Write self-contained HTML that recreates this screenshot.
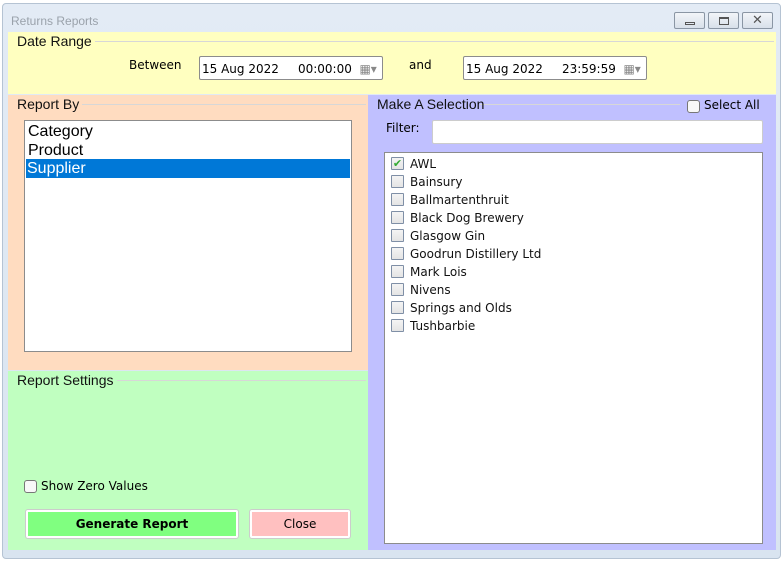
<!DOCTYPE html>
<html><head><style>
*{box-sizing:border-box}
body{margin:0;width:784px;height:561px;background:#fff;font-family:"DejaVu Sans","Liberation Sans",sans-serif;font-size:12px;position:relative;overflow:hidden}
.win{position:absolute;left:2px;top:3px;width:779px;height:556px;background:linear-gradient(#e3ebf5,#d9e4f0);border:1px solid #b5c3d3;border-radius:4px}
.abs{position:absolute}
.title{left:11px;top:14px;color:#9aa2ab;font-size:12px;font-family:"Liberation Sans",sans-serif}
.wb{position:absolute;top:12px;width:31px;height:17px;border:1px solid #8a96a4;border-radius:2px;background:linear-gradient(#f2f5f9,#d8e0ea)}
.grp{position:absolute;font-family:"Liberation Sans",sans-serif;font-size:14px;color:#111}
.line{position:absolute;height:1px;background:#d7d7d7}
.box{position:absolute;background:#fff;border:1px solid #8c8c8c}
.cb{position:absolute;width:13px;height:13px;border:1px solid #7f8fa6;background:linear-gradient(#f4f4f4,#e4e4e4);border-radius:1px}
.rcb{position:absolute;width:13px;height:13px;border:1px solid #777;background:#f8f8f8;border-radius:3px}
.item{position:absolute;left:25px;font-size:12px;color:#111}
.date{font-size:12px}
</style></head><body>
<div class="win"></div>
<div class="abs title">Returns Reports</div>
<div class="wb" style="left:674px"><div class="abs" style="left:10px;top:9px;width:10px;height:3px;border:1px solid #555"></div></div>
<div class="wb" style="left:708px"><div class="abs" style="left:10px;top:4px;width:10px;height:8px;border:1px solid #555;border-top-width:2px"></div></div>
<div class="wb" style="left:742px;color:#555;text-align:center;font-size:13px;line-height:15px">✕</div>

<div class="abs" style="left:8px;top:32px;width:768px;height:62px;background:#ffffc0"></div>
<div class="line" style="left:90px;top:41px;width:684px"></div>
<div class="grp" style="left:17px;top:33px;background:#ffffc0;padding-right:3px">Date Range</div>
<div class="abs" style="left:129px;top:58px">Between</div>
<div class="box date" style="left:199px;top:56px;width:184px;height:24px;border-radius:2px;padding:5px 2px;white-space:pre">15 Aug 2022     00:00:00  <span style="color:#888">▦▾</span></div>
<div class="abs" style="left:409px;top:58px">and</div>
<div class="box date" style="left:463px;top:56px;width:184px;height:24px;border-radius:2px;padding:5px 2px;white-space:pre">15 Aug 2022     23:59:59  <span style="color:#888">▦▾</span></div>

<div class="abs" style="left:8px;top:95px;width:360px;height:275px;background:#ffdcc0"></div>
<div class="line" style="left:82px;top:104px;width:284px"></div>
<div class="grp" style="left:17px;top:96px;background:#ffdcc0;padding-right:3px">Report By</div>
<div class="box" style="left:24px;top:120px;width:328px;height:232px;font-family:'Liberation Sans',sans-serif;font-size:16px">
<div style="padding-left:3px;height:19px;line-height:21px">Category</div>
<div style="padding-left:3px;height:19px;line-height:21px">Product</div>
<div style="padding-left:1px;height:19px;line-height:20px;background:#0078d7;color:#fff;margin:0 1px">Supplier</div>
</div>

<div class="abs" style="left:8px;top:371px;width:360px;height:179px;background:#c0ffc0"></div>
<div class="line" style="left:115px;top:380px;width:251px"></div>
<div class="grp" style="left:17px;top:372px;background:#c0ffc0;padding-right:3px">Report Settings</div>
<div class="rcb" style="left:24px;top:480px"></div>
<div class="abs" style="left:41px;top:479px">Show Zero Values</div>
<div class="abs" style="left:26px;top:510px;width:212px;height:28px;background:#80ff80;border:2px solid #fff;box-shadow:0 0 0 1px #ccc;border-radius:2px;text-align:center;line-height:24px;font-weight:bold;font-size:12px">Generate Report</div>
<div class="abs" style="left:250px;top:510px;width:100px;height:28px;background:#ffc0c0;border:2px solid #fff;box-shadow:0 0 0 1px #ccc;border-radius:2px;text-align:center;line-height:24px">Close</div>

<div class="abs" style="left:368px;top:95px;width:408px;height:455px;background:#c0c0ff"></div>
<div class="line" style="left:480px;top:104px;width:200px"></div>
<div class="grp" style="left:377px;top:96px">Make A Selection</div>
<div class="rcb" style="left:687px;top:100px"></div>
<div class="abs" style="left:704px;top:98px">Select All</div>
<div class="abs" style="left:386px;top:121px">Filter:</div>
<div class="abs" style="left:432px;top:120px;width:331px;height:24px;background:#fff;border:1px solid #ccc;border-radius:2px"></div>
<div class="box" style="left:384px;top:152px;width:379px;height:392px">
<div class="cb" style="left:6px;top:4px;color:#3a3;font-size:11px;line-height:11px;text-align:center">✔</div><div class="item" style="top:4px">AWL</div>
<div class="cb" style="left:6px;top:22px"></div><div class="item" style="top:22px">Bainsury</div>
<div class="cb" style="left:6px;top:40px"></div><div class="item" style="top:40px">Ballmartenthruit</div>
<div class="cb" style="left:6px;top:58px"></div><div class="item" style="top:58px">Black Dog Brewery</div>
<div class="cb" style="left:6px;top:76px"></div><div class="item" style="top:76px">Glasgow Gin</div>
<div class="cb" style="left:6px;top:94px"></div><div class="item" style="top:94px">Goodrun Distillery Ltd</div>
<div class="cb" style="left:6px;top:112px"></div><div class="item" style="top:112px">Mark Lois</div>
<div class="cb" style="left:6px;top:130px"></div><div class="item" style="top:130px">Nivens</div>
<div class="cb" style="left:6px;top:148px"></div><div class="item" style="top:148px">Springs and Olds</div>
<div class="cb" style="left:6px;top:166px"></div><div class="item" style="top:166px">Tushbarbie</div>
</div>
</body></html>
